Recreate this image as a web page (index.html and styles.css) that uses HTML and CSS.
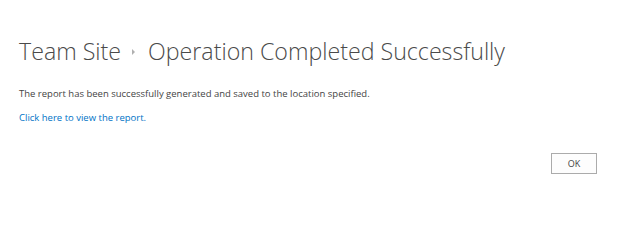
FILE: index.html
```html
<!DOCTYPE html>
<html>
<head>
<meta charset="utf-8">
<link rel="stylesheet" href="styles.css">
</head>
<body>
<div class="page">
  <h1 class="title"><span class="site">Team Site</span><span class="sep"></span><span class="op">Operation Completed Successfully</span></h1>
  <p class="msg">The report has been successfully generated and saved to the location specified.</p>
  <p class="linkrow"><a class="link" href="#">Click here to view the report.</a></p>
  <div class="actions"><button class="ok">OK</button></div>
</div>
</body>
</html>
```
FILE: styles.css
```css
html, body { margin: 0; padding: 0; background: #fff; }
.page { padding: 34px 27px 0 19px; font-family: "Open Sans", sans-serif; }
.title { margin: 0; font-family: "Open Sans", sans-serif; font-weight: 300; font-size: 23.2px; line-height: 34px; color: #4a4a4a; display: flex; align-items: center; }
.sep { width: 0; height: 0; border-left: 3px solid #b0b0b0; border-top: 3px solid transparent; border-bottom: 3px solid transparent; margin: 2px 13px 0 11px; }
.msg { margin: 19px 0 0; font-size: 9.5px; line-height: 14px; color: #444; }
.linkrow { margin: 10px 0 0; font-size: 9.5px; line-height: 14px; }
.link { color: #0072c6; text-decoration: none; }
.actions { display: flex; justify-content: flex-end; margin-top: 28px; }
.ok { width: 46px; height: 21px; border: 1px solid #ababab; background: #fdfdfd; font-family: "Open Sans", sans-serif; font-size: 9px; color: #444; padding: 0; }
```
